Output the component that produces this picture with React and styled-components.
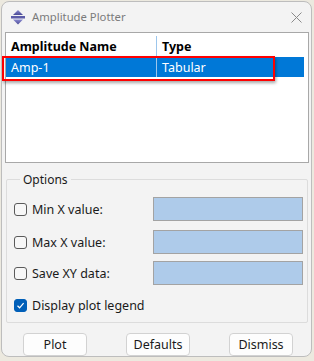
import styled, { createGlobalStyle } from "styled-components"

const GlobalStyle = createGlobalStyle`
  html, body {
    margin: 0;
    background: #ece9df;
  }
  body {
    font-family: "Noto Sans", "Open Sans", sans-serif;
    font-size: 12px;
    color: #1a1a1a;
  }
`

const Window = styled.div`
  margin: 1px 0 0 1px;
  width: 311px;
  height: 356px;
  box-sizing: border-box;
  border: 1px solid #bdbdbd;
  border-radius: 8px;
  background: #f3f3f3;
  display: flex;
  flex-direction: column;
  overflow: hidden;
`

const TitleBar = styled.div`
  height: 31px;
  display: flex;
  align-items: center;
  padding: 0 9px 0 8px;
  gap: 6px;
`

const Title = styled.span`
  flex: 1;
  color: #7b7b7b;
  font-size: 11.3px;
  margin-top: -1px;
`

const Body = styled.div`
  padding: 0 2px 0 3px;
  display: flex;
  flex-direction: column;
`

const TableBox = styled.div`
  position: relative;
  height: 131px;
  box-sizing: border-box;
  border: 1px solid #a8a8a8;
  background: #fff;
`

const Row = styled.div`
  display: grid;
  grid-template-columns: 150px 1fr;
  height: ${(p) => (p.$header ? "24px" : "20px")};
  padding-top: ${(p) => (p.$header ? "3px" : "0")};
  box-sizing: border-box;
  margin-right: 4px;
  background: ${(p) => (p.$selected ? "#0078d7" : "transparent")};
  color: ${(p) => (p.$selected ? "#fff" : "#000")};
  font-weight: ${(p) => (p.$header ? 700 : 400)};
  font-size: 12.5px;
`

const Cell = styled.div`
  display: flex;
  align-items: center;
  padding-left: 5px;
  & + & {
    border-left: 1px solid ${(p) => (p.$selected ? "#9cc6ec" : "#e3e3e3")};
  }
`

const Highlight = styled.div`
  position: absolute;
  left: -4px;
  top: 23px;
  width: 273px;
  height: 25px;
  box-sizing: border-box;
  border: 2.5px solid #f00;
  box-shadow: 1px 2px 3px rgba(0, 0, 0, 0.35);
  pointer-events: none;
`

const Group = styled.fieldset`
  margin: 8px 1px 0 1px;
  padding: 0 0 6px 7px;
  min-width: 0;
  border: 1px solid #dcdcdc;
  border-radius: 2px;
  display: flex;
  flex-direction: column;
`

const Legend = styled.legend`
  margin-left: 6px;
  padding: 0 3px;
  font-size: 12px;
  color: #1a1a1a;
`

const OptionRow = styled.div`
  display: flex;
  align-items: center;
  height: ${(p) => (p.$plain ? "22px" : "24px")};
  margin-top: ${(p) => p.$gap}px;
`

const Label = styled.label`
  display: flex;
  align-items: center;
  gap: 5px;
  width: 139px;
  font-size: 12.5px;
`

const Check = styled.span`
  width: 13px;
  height: 13px;
  box-sizing: border-box;
  border-radius: 3px;
  border: 1px solid ${(p) => (p.$on ? "#005fb8" : "#5a5a5a")};
  background: ${(p) => (p.$on ? "#005fb8" : "#f7f7f7")};
  display: flex;
  align-items: center;
  justify-content: center;
  flex: none;
`

const Field = styled.div`
  width: 150px;
  height: 24px;
  box-sizing: border-box;
  border: 1px solid #a3a3a3;
  background: #aecbea;
`

const ButtonBar = styled.div`
  display: flex;
  gap: 39px;
  padding: 10px 0 0 18px;
`

const Button = styled.button`
  width: 64px;
  height: 23px;
  border: 1px solid #d2d2d2;
  border-radius: 4px;
  background: #fdfdfd;
  font-family: inherit;
  font-size: 12.5px;
  color: #1a1a1a;
  padding: 0;
`

const AppIcon = () => (
  <svg width="16" height="16" viewBox="0 0 16 16">
    <defs>
      <linearGradient id="ig" x1="0" y1="0" x2="0" y2="1">
        <stop offset="0" stopColor="#8a8ad0" />
        <stop offset="1" stopColor="#4a4a96" />
      </linearGradient>
    </defs>
    <polygon points="8,1 3,6 13,6" fill="url(#ig)" />
    <rect x="1" y="7" width="14" height="2.5" fill="#5c5ca8" />
    <polygon points="3,10.5 13,10.5 8,15.5" fill="url(#ig)" />
  </svg>
)

const CloseIcon = () => (
  <svg width="11" height="11" viewBox="0 0 11 11">
    <path d="M0.5 0.5 L10.5 10.5 M10.5 0.5 L0.5 10.5" stroke="#8a8a8a" strokeWidth="1" />
  </svg>
)

const Tick = () => (
  <svg width="9" height="9" viewBox="0 0 9 9">
    <path d="M1.5 4.8 L3.6 6.8 L7.6 2.2" fill="none" stroke="#fff" strokeWidth="1.2" />
  </svg>
)

const options = [
  { label: "Min X value:", field: true, gap: 9 },
  { label: "Max X value:", field: true, gap: 9 },
  { label: "Save XY data:", field: true, gap: 7 },
  { label: "Display plot legend", checked: true, gap: 9 },
]

const App = () => (
  <>
    <GlobalStyle />
    <Window>
      <TitleBar>
        <AppIcon />
        <Title>Amplitude Plotter</Title>
        <CloseIcon />
      </TitleBar>
      <Body>
        <TableBox>
          <Row $header>
            <Cell>Amplitude Name</Cell>
            <Cell>Type</Cell>
          </Row>
          <Row $selected>
            <Cell $selected>Amp-1</Cell>
            <Cell $selected>Tabular</Cell>
          </Row>
          <Highlight />
        </TableBox>
        <Group>
          <Legend>Options</Legend>
          {options.map((o) => (
            <OptionRow key={o.label} $gap={o.gap} $plain={!o.field}>
              <Label>
                <Check $on={o.checked}>{o.checked && <Tick />}</Check>
                {o.label}
              </Label>
              {o.field && <Field />}
            </OptionRow>
          ))}
        </Group>
        <ButtonBar>
          <Button>Plot</Button>
          <Button>Defaults</Button>
          <Button>Dismiss</Button>
        </ButtonBar>
      </Body>
    </Window>
  </>
)

export default App
